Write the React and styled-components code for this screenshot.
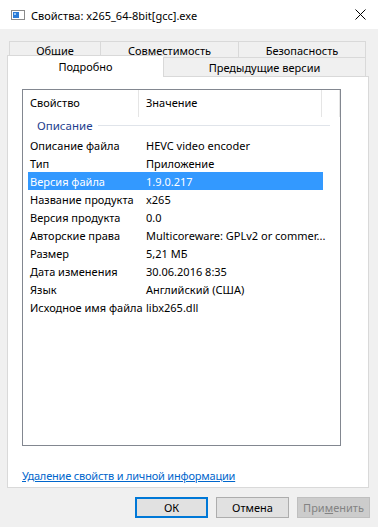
import styled, { createGlobalStyle } from "styled-components";

const GlobalStyle = createGlobalStyle`
  html, body {
    margin: 0;
    padding: 0;
    background: #f0f0f0;
  }
  body {
    font-family: "Noto Sans", "Open Sans", sans-serif;
    font-size: 11px;
    color: #000000;
  }
`;

const props = [
  ["Описание файла", "HEVC video encoder"],
  ["Тип", "Приложение"],
  ["Версия файла", "1.9.0.217", true],
  ["Название продукта", "x265"],
  ["Версия продукта", "0.0"],
  ["Авторские права", "Multicoreware: GPLv2 or commer..."],
  ["Размер", "5,21 МБ"],
  ["Дата изменения", "30.06.2016 8:35"],
  ["Язык", "Английский (США)"],
  ["Исходное имя файла", "libx265.dll"],
];

export default function App() {
  return (
    <>
      <GlobalStyle />
      <Window>
        <TitleBar>
          <AppIcon width="14" height="10" viewBox="0 0 14 10">
            <rect x="0.5" y="0.5" width="13" height="9" fill="#ffffff" stroke="#8a8a8a" />
            <rect x="2" y="2" width="6" height="6" fill="#2b7bd6" />
            <rect x="3" y="3" width="2" height="2" fill="#9cc7f2" />
          </AppIcon>
          <Title>Свойства: x265_64-8bit[gcc].exe</Title>
          <Close width="11" height="11" viewBox="0 0 11 11">
            <path d="M0.5 0.5 L10.5 10.5 M10.5 0.5 L0.5 10.5" stroke="#000" strokeWidth="1" />
          </Close>
        </TitleBar>
        <Body>
          <Tabs>
            <TabRow $h={16}>
              <Tab $w={92}>Общие</Tab>
              <Tab $w={138}>Совместимость</Tab>
              <Tab $w={127}>Безопасность</Tab>
            </TabRow>
            <TabRow $h={19}>
              <Tab $w={156} $selected>Подробно</Tab>
              <Tab $w={203} $second>Предыдущие версии</Tab>
            </TabRow>
          </Tabs>
          <Panel>
            <ListView>
              <Header>
                <HeaderCell $w={116}>Свойство</HeaderCell>
                <HeaderCell $w={183}>Значение</HeaderCell>
                <HeaderCell $w={18} />
              </Header>
              <Group>
                <GroupTitle>Описание</GroupTitle>
                <GroupLine />
              </Group>
              {props.map(([k, v, sel]) => (
                <Row key={k} $selected={sel}>
                  <Cell $w={116}>{k}</Cell>
                  <Cell $w={175}>{v}</Cell>
                </Row>
              ))}
            </ListView>
            <RemoveLink href="#">Удаление свойств и личной информации</RemoveLink>
          </Panel>
          <Buttons>
            <Button $default>ОК</Button>
            <Button>Отмена</Button>
            <Button disabled>
              При<u>м</u>енить
            </Button>
          </Buttons>
        </Body>
      </Window>
    </>
  );
}

const Window = styled.div`
  width: 378px;
  height: 527px;
  background: #f0f0f0;
  display: flex;
  flex-direction: column;
  overflow: hidden;
`;

const TitleBar = styled.div`
  height: 29px;
  background: #ffffff;
  display: flex;
  align-items: center;
  padding: 0 11px;
`;

const AppIcon = styled.svg`
  flex: none;
  margin-top: 1px;
`;

const Title = styled.div`
  margin-left: 6px;
  flex: 1;
  font-size: 11px;
  margin-top: 1px;
`;

const Close = styled.svg`
  flex: none;
  margin-right: 1px;
`;

const Body = styled.div`
  padding: 12px 0 0 7px;
  display: flex;
  flex-direction: column;
`;

const Tabs = styled.div`
  display: flex;
  flex-direction: column;
  padding-left: 2px;
  width: 357px;
  position: relative;
  z-index: 1;
`;

const TabRow = styled.div`
  display: flex;
  height: ${(p) => p.$h}px;
`;

const Tab = styled.div`
  box-sizing: border-box;
  width: ${(p) => p.$w}px;
  flex: none;
  display: flex;
  align-items: center;
  justify-content: center;
  background: ${(p) => (p.$selected ? "#ffffff" : "#f0f0f0")};
  border: 1px solid #d9d9d9;
  border-left-width: ${(p) => (p.$selected ? "1px" : "0")};
  &:first-child {
    border-left-width: 1px;
  }
  border-bottom: none;
  white-space: nowrap;
  padding-top: 1px;
  ${(p) =>
    p.$selected &&
    `
    margin: -2px 0 -1px -2px;
    height: 22px;
    border-right: none;
    padding-top: 0;
  `}
  ${(p) =>
    p.$second &&
    `
    border-left: 1px solid #d9d9d9;
  `}
`;

const Panel = styled.div`
  box-sizing: border-box;
  width: 362px;
  height: 412px;
  background: #ffffff;
  border: 1px solid #d9d9d9;
  padding: 12px 0 0 14px;
  display: flex;
  flex-direction: column;
`;

const ListView = styled.div`
  box-sizing: border-box;
  width: 319px;
  height: 357px;
  border: 1px solid #828790;
  background: #ffffff;
  display: flex;
  flex-direction: column;
`;

const Header = styled.div`
  display: flex;
  height: 27px;
`;

const HeaderCell = styled.div`
  box-sizing: border-box;
  width: ${(p) => p.$w}px;
  flex: none;
  padding-left: 7px;
  display: flex;
  align-items: center;
  border-right: 1px solid #e5e5e5;
  padding-bottom: 2px;
`;

const Group = styled.div`
  display: flex;
  align-items: center;
  height: 16px;
  padding-left: 14px;
  margin-bottom: 3px;
`;

const GroupTitle = styled.div`
  color: #1e3e8e;
  font-size: 11.5px;
`;

const GroupLine = styled.div`
  height: 1px;
  width: 232px;
  margin-left: 6px;
  background: #e0e4ea;
  margin-top: 1px;
`;

const Row = styled.div`
  display: flex;
  align-items: center;
  height: 18px;
  margin-left: 5px;
  width: 293px;
  padding-left: 2px;
  background: ${(p) => (p.$selected ? "#3399ff" : "transparent")};
  color: ${(p) => (p.$selected ? "#ffffff" : "#000000")};
`;

const Cell = styled.div`
  width: ${(p) => p.$w}px;
  flex: none;
  white-space: nowrap;
  overflow: visible;
`;

const RemoveLink = styled.a`
  margin-top: 22px;
  color: #0066cc;
  text-decoration: underline;
  font-size: 11px;
  letter-spacing: -0.2px;
  align-self: flex-start;
`;

const Buttons = styled.div`
  display: flex;
  justify-content: flex-end;
  gap: 8px;
  width: 363px;
  margin-top: 9px;
`;

const Button = styled.button`
  box-sizing: border-box;
  width: 73px;
  height: 21px;
  font-family: "Noto Sans", "Open Sans", sans-serif;
  font-size: 11px;
  padding: 0;
  background: #e1e1e1;
  color: #000000;
  border: 1px solid ${(p) => (p.$default ? "#0078d7" : "#adadad")};
  box-shadow: ${(p) => (p.$default ? "inset 0 0 0 1px #0078d7" : "none")};
  &:disabled {
    background: #cccccc;
    border-color: #bfbfbf;
    color: #838383;
  }
`;
